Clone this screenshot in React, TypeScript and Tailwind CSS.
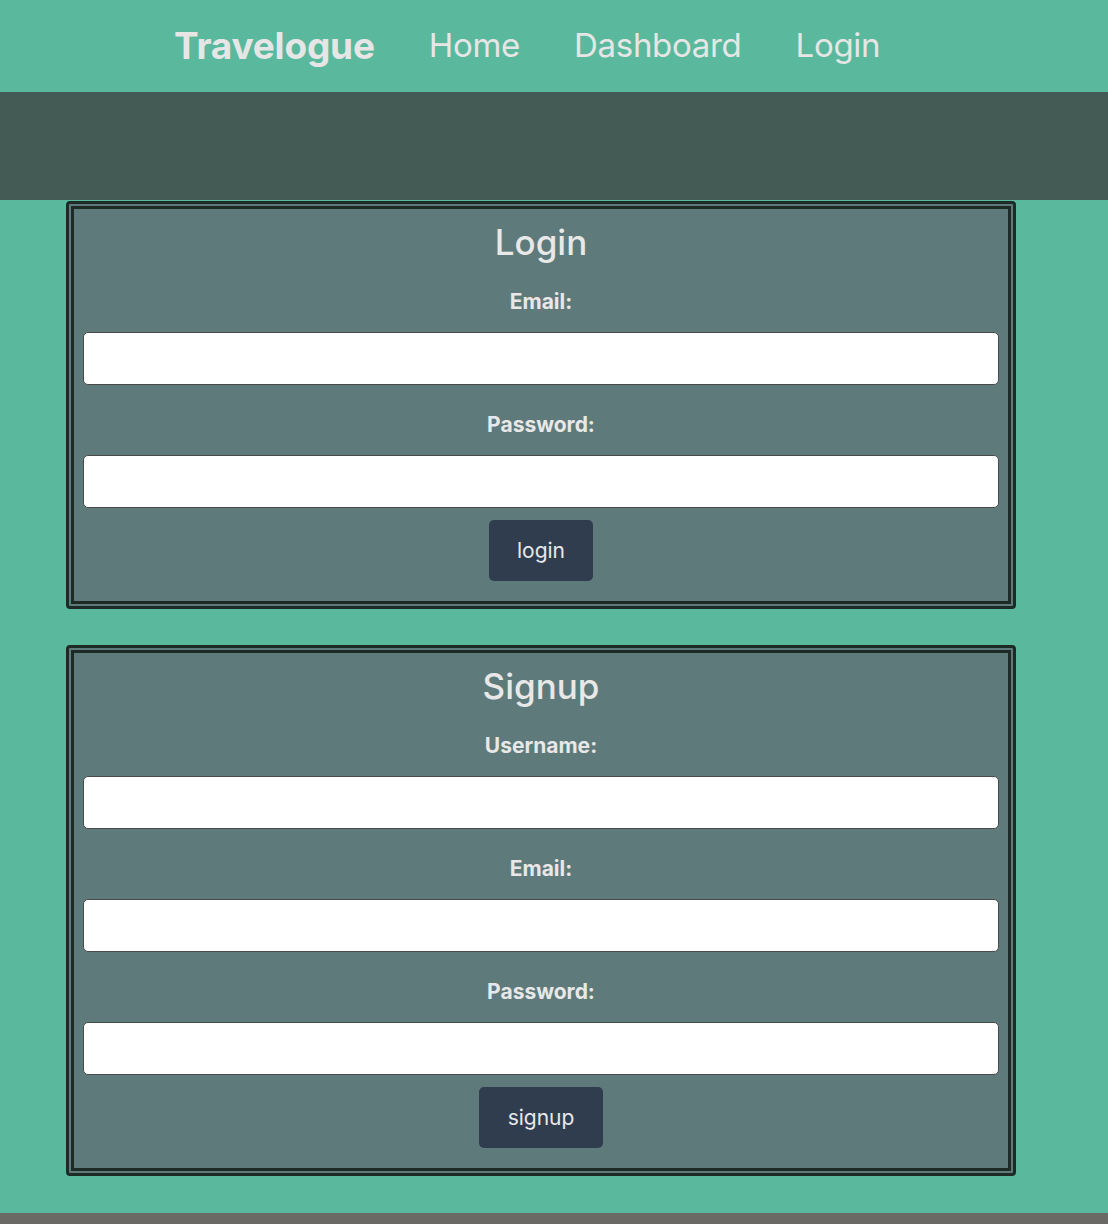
import React from "react";

function Field({ label }: { label: string }) {
  return (
    <div className="flex flex-col">
      <label className="mt-[28px] mb-[18px] text-center text-[21px] leading-[24px] font-bold text-[#e8e8e8]">
        {label}
      </label>
      <input className="h-[53px] w-full rounded-[5px] border border-[#4a4a4a] bg-white px-2" />
    </div>
  );
}

function Card({
  title,
  fields,
  button,
  btnW,
}: {
  title: string;
  fields: string[];
  button: string;
  btnW: string;
}) {
  return (
    <div className="w-[950px] rounded-[4px] border-[8px] border-double border-[#1e2a25] bg-[#5f7a7b] px-[9px] pt-[13px] pb-[20px]">
      <h2 className="text-center text-[35px] leading-[40px] font-medium text-[#e8e8e8]">{title}</h2>
      {fields.map((f) => (
        <Field key={f} label={f} />
      ))}
      <div className="mt-[12px] flex justify-center">
        <button className={`h-[61px] ${btnW} rounded-[5px] bg-[#2f3d4e] text-[21px] text-[#e8e8e8]`}>
          {button}
        </button>
      </div>
    </div>
  );
}

export default function App() {
  return (
    <div
      className="min-h-[1224px] w-[1108px] bg-[#5ab99c]"
      style={{ fontFamily: "Inter, 'Noto Sans', sans-serif" }}
    >
      <header className="flex h-[92px] items-center gap-[54px] pl-[174px] text-[#e6e6e6]">
        <span className="text-[37px] font-bold tracking-[-0.2px]">Travelogue</span>
        <a className="text-[33px] tracking-[-0.3px]">Home</a>
        <a className="text-[33px] tracking-[-0.3px]">Dashboard</a>
        <a className="text-[33px] tracking-[-0.3px]">Login</a>
      </header>
      <div className="h-[108px] bg-[#435a55]" />
      <main className="flex flex-col items-start gap-[36px] pt-[1px] pl-[66px]">
        <Card title="Login" fields={["Email:", "Password:"]} button="login" btnW="w-[104px]" />
        <Card
          title="Signup"
          fields={["Username:", "Email:", "Password:"]}
          button="signup"
          btnW="w-[124px]"
        />
      </main>
      <div className="mt-[37px] h-[11px] bg-[#6b6965]" />
    </div>
  );
}
